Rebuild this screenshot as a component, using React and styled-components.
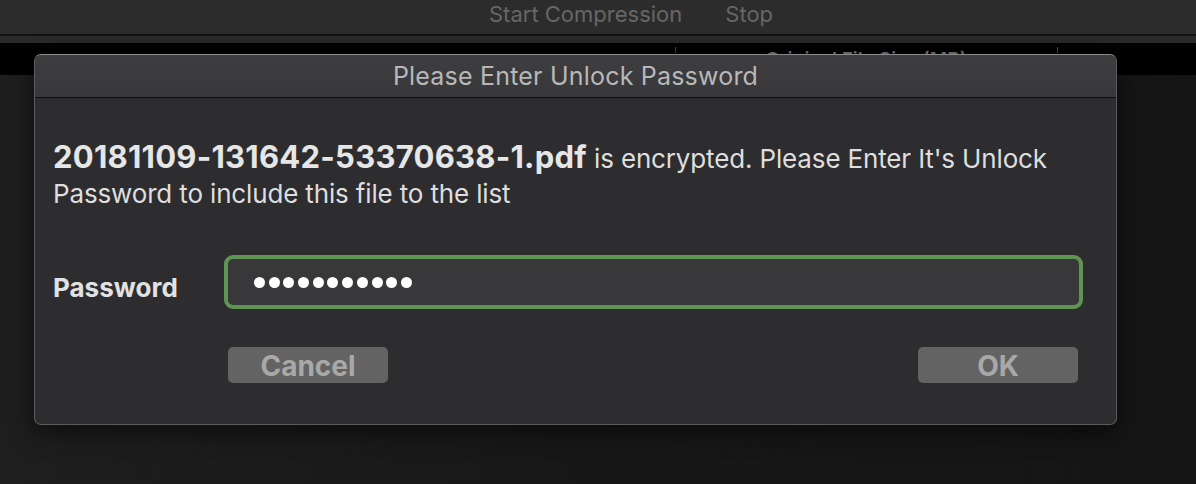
import React from "react";
import styled, { createGlobalStyle } from "styled-components";

const Global = createGlobalStyle`
  html, body { margin: 0; padding: 0; }
  body {
    width: 1196px;
    height: 484px;
    overflow: hidden;
    background: #1c1c1c;
    font-family: Inter, "Open Sans", "Liberation Sans", sans-serif;
  }
`;

const Page = styled.div`
  position: relative;
  width: 1196px;
  height: 484px;
  display: flex;
  flex-direction: column;
  background: #1c1c1c;
`;

const Toolbar = styled.div`
  height: 36px;
  box-sizing: border-box;
  padding: 0 0 7px 489px;
  background: #2c2c2c;
  border-bottom: 2px solid #141414;
  display: flex;
  align-items: center;
  gap: 43px;
`;

const ToolItem = styled.span`
  font-size: 22px;
  color: #666;
`;

const Strip = styled.div`
  height: 7px;
  background: #2a2a2a;
`;

const HeaderBar = styled.div`
  height: 32px;
  background: #000;
  display: flex;
  align-items: flex-start;
`;

const HeaderCol = styled.div`
  position: relative;
  width: ${(p) => p.$w}px;
  height: 100%;
  box-sizing: border-box;
  padding-top: 5px;
  display: flex;
  justify-content: center;
  font-size: 19px;
  font-weight: 600;
  color: #7a7a7a;

  &::before {
    content: "";
    display: ${(p) => (p.$sep ? "block" : "none")};
    position: absolute;
    left: 0;
    top: 4px;
    height: 6px;
    border-left: 1px solid #4a4a4a;
  }
`;

const Content = styled.div`
  flex: 1;
  background: linear-gradient(90deg, #1e1e1e, #171717 50%, #151515);
`;

const Dialog = styled.div`
  position: absolute;
  left: 34px;
  top: 54px;
  width: 1083px;
  height: 371px;
  box-sizing: border-box;
  border-radius: 7px;
  border: 1px solid #5c5c5e;
  border-top-color: #8a8a8c;
  background: #2d2d2f;
  box-shadow: 0 6px 24px rgba(0, 0, 0, 0.6);
  display: flex;
  flex-direction: column;
  overflow: hidden;
`;

const TitleBar = styled.div`
  height: 42px;
  flex: none;
  background: linear-gradient(#3e3e40, #38383a);
  border-bottom: 1px solid #0e0e0e;
  display: flex;
  align-items: center;
  justify-content: center;
  font-size: 25px;
  color: #b8b8b8;
  letter-spacing: 0.2px;
`;

const Body = styled.div`
  flex: 1;
  padding: 43px 33px 0 18px;
  display: flex;
  flex-direction: column;
`;

const Message = styled.p`
  margin: 0;
  font-size: 26px;
  line-height: 35px;
  color: #dedede;
  letter-spacing: -0.15px;
`;

const FileName = styled.b`
  font-size: 31px;
  line-height: 1;
  font-weight: 700;
  color: #e6e6e6;
  letter-spacing: 0.25px;
`;

const Row = styled.div`
  margin-top: 44px;
  display: flex;
  align-items: center;
`;

const Label = styled.label`
  width: 171px;
  margin-top: 10px;
  font-size: 26px;
  font-weight: 700;
  color: #e2e2e2;
`;

const Field = styled.div`
  flex: 1;
  height: 54px;
  box-sizing: border-box;
  border: 4px solid #5f9452;
  border-radius: 9px;
  background: #38383a;
  display: flex;
  align-items: center;
  padding-left: 26px;
  gap: 3.7px;
`;

const Dot = styled.span`
  width: 11px;
  height: 11px;
  border-radius: 50%;
  background: #fff;
`;

const Buttons = styled.div`
  margin-top: 38px;
  padding-left: 175px;
  padding-right: 5px;
  display: flex;
  justify-content: space-between;
`;

const Button = styled.button`
  width: 160px;
  height: 36px;
  border: none;
  border-radius: 5px;
  background: #636363;
  color: #a8a8a8;
  font-family: inherit;
  font-size: 28px;
  font-weight: 700;
  padding: 2px 0 0;
  display: flex;
  align-items: center;
  justify-content: center;
`;

export default function App() {
  return (
    <>
      <Global />
      <Page>
        <Toolbar>
          <ToolItem>Start Compression</ToolItem>
          <ToolItem>Stop</ToolItem>
        </Toolbar>
        <Strip />
        <HeaderBar>
          <HeaderCol $w={675} />
          <HeaderCol $w={382} $sep>Original File Size (MB)</HeaderCol>
          <HeaderCol $w={139} $sep />
        </HeaderBar>
        <Content />
        <Dialog role="dialog">
          <TitleBar>Please Enter Unlock Password</TitleBar>
          <Body>
            <Message>
              <FileName>20181109-131642-53370638-1.pdf</FileName> is encrypted. Please Enter It's Unlock
              <br />
              Password to include this file to the list
            </Message>
            <Row>
              <Label>Password</Label>
              <Field>
                {Array.from({ length: 11 }).map((_, i) => (
                  <Dot key={i} />
                ))}
              </Field>
            </Row>
            <Buttons>
              <Button>Cancel</Button>
              <Button>OK</Button>
            </Buttons>
          </Body>
        </Dialog>
      </Page>
    </>
  );
}
